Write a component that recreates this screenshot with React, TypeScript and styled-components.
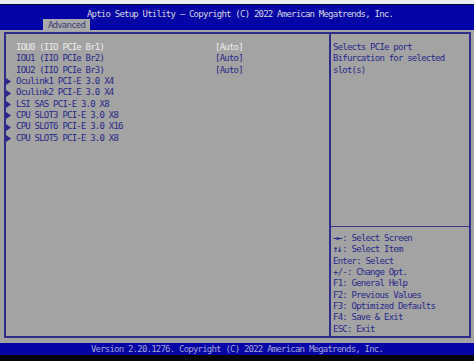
import React from "react";
import styled, { createGlobalStyle } from "styled-components";

const Global = createGlobalStyle`
  html, body { margin: 0; padding: 0; background: #a3a3a3; }
  * { box-sizing: border-box; }
`;

const Page = styled.div`
  width: 474px;
  height: 361px;
  display: flex;
  flex-direction: column;
  overflow: hidden;
  font-family: "DejaVu Sans Mono", "Liberation Mono", monospace;
  font-size: 9px;
  letter-spacing: -0.78px;
  background: #a3a3a3;
`;

const TopStrip = styled.div`
  height: 5px;
  background: #ececec;
  border-bottom: 1px solid #06063a;
`;

const Header = styled.div`
  height: 25px;
  background: #0404a6;
  display: flex;
  flex-direction: column;
`;

const Title = styled.div`
  height: 14px;
  line-height: 18px;
  text-align: center;
  color: #d6d6e2;
  padding-left: 6px;
`;

const Tabs = styled.div`
  flex: 1;
  display: flex;
  padding-left: 43px;
`;

const Tab = styled.div<{ $active?: boolean }>`
  width: 47px;
  background: ${(p) => (p.$active ? "#a9a9a9" : "transparent")};
  color: #3c3c78;
  text-align: center;
  line-height: 12px;
`;

const Body = styled.div`
  flex: 1;
  padding: 2px 3px 5px 4px;
  display: flex;
`;

const Box = styled.div`
  flex: 1;
  border: 2px solid #2e2e8a;
  display: grid;
  grid-template-columns: 323px 1fr;
`;

const Main = styled.div`
  padding-top: 8px;
  display: flex;
  flex-direction: column;
`;

const Row = styled.div<{ $hl?: boolean }>`
  height: 11.35px;
  line-height: 11.35px;
  display: grid;
  grid-template-columns: 10px 199px 1fr;
  color: ${(p) => (p.$hl ? "#ececec" : "#28288a")};
  white-space: pre;
`;

const Arrow = styled.span`
  display: flex;
  align-items: center;
  svg { display: block; }
`;

const Help = styled.div`
  border-left: 2px solid #2e2e8a;
  display: flex;
  flex-direction: column;
`;

const HelpText = styled.div`
  padding: 8px 0 0 2px;
  flex: 1;
`;

const HelpLine = styled.div`
  height: 11.35px;
  line-height: 11.35px;
  color: #28288a;
  white-space: pre;
`;

const KeySym = styled.span`
  font-weight: bold;
  letter-spacing: -1.5px;
  margin-right: 1.5px;
`;

const Keys = styled.div`
  border-top: 1px solid #3a3a8a;
  padding: 6px 0 1px 2px;
`;

const Footer = styled.div`
  height: 12px;
  background: #0404a6;
  color: #a4a4d4;
  text-align: center;
  line-height: 13px;
`;

const Bottom = styled.div`
  height: 6px;
  background: #050505;
`;

const Tri = () => (
  <svg width="5" height="7" viewBox="0 0 5 7">
    <path d="M0 0 L5 3.5 L0 7 Z" fill="#28288a" />
  </svg>
);

const rows: { label: string; value?: string; sub?: boolean; hl?: boolean }[] = [
  { label: "IOU0 (IIO PCIe Br1)", value: "[Auto]", hl: true },
  { label: "IOU1 (IIO PCIe Br2)", value: "[Auto]" },
  { label: "IOU2 (IIO PCIe Br3)", value: "[Auto]" },
  { label: "Oculink1 PCI-E 3.0 X4", sub: true },
  { label: "Oculink2 PCI-E 3.0 X4", sub: true },
  { label: "LSI SAS PCI-E 3.0 X8", sub: true },
  { label: "CPU SLOT3 PCI-E 3.0 X8", sub: true },
  { label: "CPU SLOT6 PCI-E 3.0 X16", sub: true },
  { label: "CPU SLOT5 PCI-E 3.0 X8", sub: true },
];

const helpLines = ["Selects PCIe port", "Bifurcation for selected", "slot(s)"];

const keys: { sym?: string; text: string }[] = [
  { sym: "→←", text: ": Select Screen" },
  { sym: "↑↓", text: ": Select Item" },
  { text: "Enter: Select" },
  { text: "+/-: Change Opt." },
  { text: "F1: General Help" },
  { text: "F2: Previous Values" },
  { text: "F3: Optimized Defaults" },
  { text: "F4: Save & Exit" },
  { text: "ESC: Exit" },
];

export default function App() {
  return (
    <>
      <Global />
      <Page>
        <TopStrip />
        <Header>
          <Title>Aptio Setup Utility – Copyright (C) 2022 American Megatrends, Inc.</Title>
          <Tabs>
            <Tab $active>Advanced</Tab>
          </Tabs>
        </Header>
        <Body>
          <Box>
            <Main>
              {rows.map((r) => (
                <Row key={r.label} $hl={r.hl}>
                  <Arrow>{r.sub ? <Tri /> : null}</Arrow>
                  <span>{r.label}</span>
                  <span>{r.value ?? ""}</span>
                </Row>
              ))}
            </Main>
            <Help>
              <HelpText>
                {helpLines.map((l) => (
                  <HelpLine key={l}>{l}</HelpLine>
                ))}
              </HelpText>
              <Keys>
                {keys.map((k) => (
                  <HelpLine key={k.text}>
                    {k.sym ? <KeySym>{k.sym}</KeySym> : null}
                    {k.text}
                  </HelpLine>
                ))}
              </Keys>
            </Help>
          </Box>
        </Body>
        <Footer>Version 2.20.1276. Copyright (C) 2022 American Megatrends, Inc.</Footer>
        <Bottom />
      </Page>
    </>
  );
}
